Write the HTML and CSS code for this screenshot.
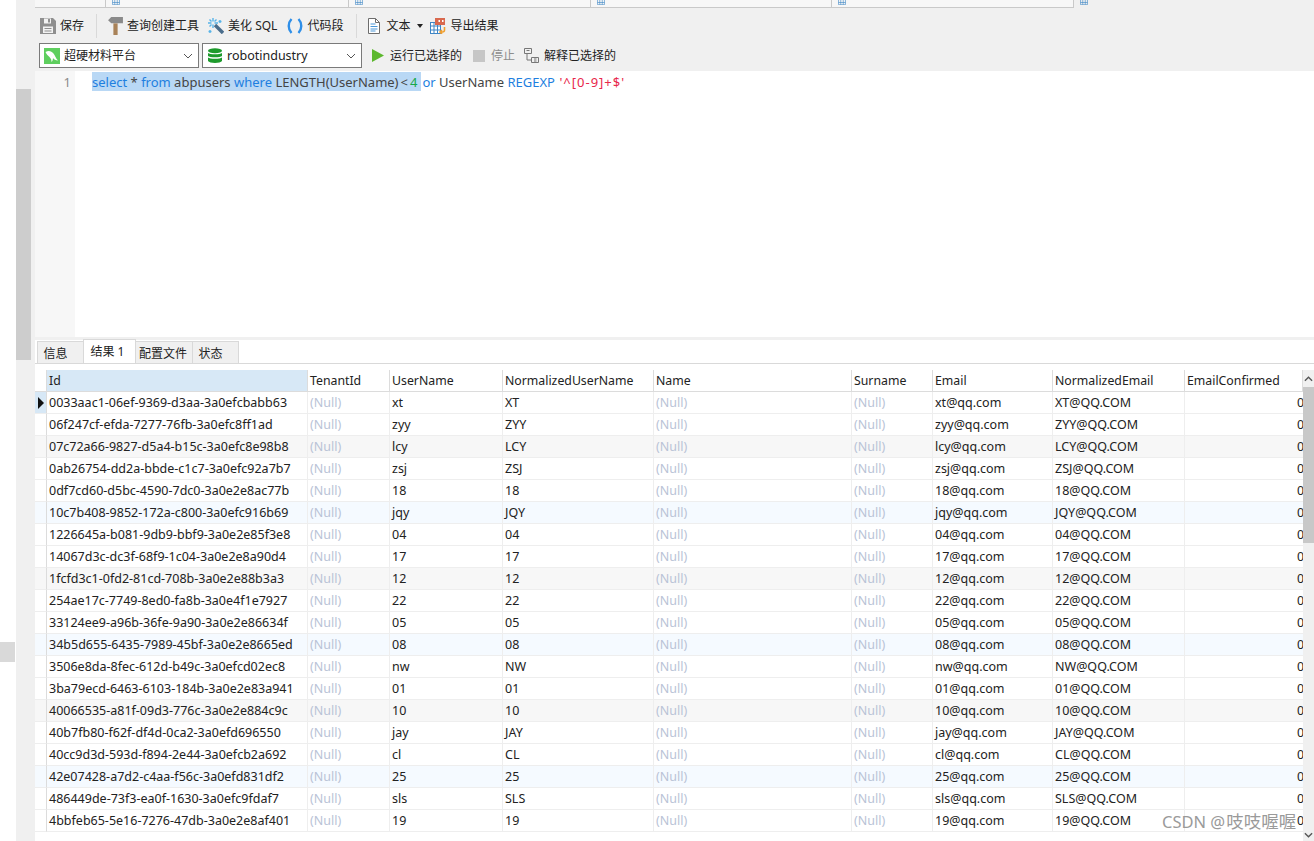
FILE: index.html
```html
<!DOCTYPE html>
<html lang="zh">
<head>
<meta charset="utf-8">
<title>Navicat</title>
<link rel="stylesheet" href="styles.css">
</head>
<body>
<div class="app">
  <aside class="rail-outer"><div class="rail-outer-thumb"></div></aside>
  <aside class="rail-inner"><div class="rail-inner-thumb"></div></aside>
  <main class="main">
    <div class="doc-tabs">
      <div class="doc-strip">
        <div class="doc-tab doc-tab-1"></div>
        <div class="doc-tab doc-tab-2"><svg class="mini" viewBox="0 0 12 8"><path d="M.5 0v7.500h11V0M4 0v7.500M8 0v7.500M.5 4h11" fill="none" stroke="#3f86c6"/></svg></div>
        <div class="doc-tab doc-tab-3"><svg class="mini" viewBox="0 0 12 8"><path d="M.5 0v7.500h11V0M4 0v7.500M8 0v7.500M.5 4h11" fill="none" stroke="#3f86c6"/></svg></div>
        <div class="doc-tab doc-tab-4"><svg class="mini" viewBox="0 0 12 8"><path d="M.5 0v7.500h11V0M4 0v7.500M8 0v7.500M.5 4h11" fill="none" stroke="#3f86c6"/></svg></div>
        <div class="doc-tab doc-tab-5"><svg class="mini" viewBox="0 0 12 8"><path d="M.5 0v7.500h11V0M4 0v7.500M8 0v7.500M.5 4h11" fill="none" stroke="#3f86c6"/></svg></div>
      </div>
      <svg class="mini mini-after" viewBox="0 0 12 8"><path d="M.5 0v7.500h11V0M4 0v7.500M8 0v7.500M.5 4h11" fill="none" stroke="#3f86c6"/></svg>
    </div>

    <div class="toolbar">
      <span class="tool tool-save"><svg class="ico" viewBox="0 0 16 16"><path d="M0 0h13l3 3v13H0z" fill="#8f8f8f"/><rect x="4" y=".5" width="7" height="5" fill="#f2f2f2"/><rect x="8" y="1" width="2" height="3.500" fill="#8f8f8f"/><rect x="3" y="8.500" width="10" height="6.500" fill="#f2f2f2"/><path d="M4.500 10.500h7M4.500 13h7" stroke="#8f8f8f"/></svg>保存</span>
      <i class="sep sep-a"></i>
      <span class="tool tool-query"><svg class="ico ico-ham" viewBox="0 0 14 17"><path d="M0 3l3-3h11v6H3z" fill="#8a8a8a"/><path d="M5 6h4v11H5z" fill="#a98258"/></svg>查询创建工具</span>
      <span class="tool tool-beauty"><svg class="ico" viewBox="0 0 16 16"><path d="M7 7l8 8" stroke="#4a6d8c" stroke-width="3.400"/><path d="M5 0v3.500M5 6.500V10M0 5h3.500M6.500 5H10M1.500 1.500l2 2M8.500 1.500l-2 2M1.500 8.500l2-2M12 2v3M10.500 3.500h3M2 12v3M.5 13.500h3" stroke="#57b3e8" stroke-width="1.400"/></svg>美化 SQL</span>
      <span class="tool tool-snippet"><svg class="ico ico-paren" viewBox="0 0 16 16"><path d="M4.500 1C.8 5 .8 11 4.500 15M11.500 1c3.700 4 3.700 10 0 14" fill="none" stroke="#2f8fe8" stroke-width="2.400"/></svg>代码段</span>
      <i class="sep sep-b"></i>
      <span class="tool tool-text"><svg class="ico" viewBox="0 0 14 16"><path d="M1.500.5h7l4 4v11h-11z" fill="#fff" stroke="#6d6d6d"/><path d="M8.500.5v4h4" fill="none" stroke="#6d6d6d"/><path d="M3.500 6h5M3.500 8.500h7M3.500 11h7M3.500 13h5" stroke="#4a97d8"/></svg>文本<b class="caret"></b></span>
      <span class="tool tool-export"><svg class="ico" viewBox="0 0 16 16"><rect x=".5" y="4.500" width="10" height="11" fill="#fff" stroke="#3f86c6"/><path d="M.5 8h10M.5 12h10M4 4.500v11M7.500 4.500v11" stroke="#3f86c6"/><rect x="5" y="0" width="10" height="7" fill="#d9694f"/><path d="M8.500 3h1.500M12 3h1.500" stroke="#fff" stroke-width="2"/><path d="M14.500 9v3a2 2 0 0 1-2 2h-2M12 12l-2 2 2 2" fill="none" stroke="#f0a030" stroke-width="1.600"/></svg>导出结果</span>
    </div>

    <div class="toolbar toolbar-run">
      <div class="select select-conn"><svg class="ico-sel" viewBox="0 0 16 16"><rect width="16" height="16" fill="#5fcf5f"/><path d="M1.500 4c3-2 6-1 8 1.500 1.500 2 2 4.500 4.500 7-2.500 0-4-1-5-2.500 0 1.500-.5 3-1.500 4 0-2-.5-3.500-2-5C3.500 7.500 2.500 6 1.500 4z" fill="#fff"/></svg><span class="sel-text">超硬材料平台</span><svg class="chev" viewBox="0 0 10 6"><path d="M1 1l4 4 4-4" fill="none" stroke="#555"/></svg></div>
      <div class="select select-db"><svg class="ico-sel" viewBox="0 0 16 16"><ellipse cx="8" cy="2.800" rx="7" ry="2.500" fill="#1d9a2c"/><path d="M1 5c1.500 1.800 12.500 1.800 14 0v3c-1.500 1.800-12.500 1.800-14 0zM1 9.500c1.500 1.800 12.500 1.800 14 0v3.500c-1.500 2.600-12.500 2.600-14 0z" fill="#1d9a2c"/></svg><span class="sel-text sel-latin">robotindustry</span><svg class="chev" viewBox="0 0 10 6"><path d="M1 1l4 4 4-4" fill="none" stroke="#555"/></svg></div>
      <span class="tool tool-run"><svg class="ico-run" viewBox="0 0 12 13"><path d="M0 0l12 6.500L0 13z" fill="#5cb82e"/></svg>运行已选择的</span>
      <span class="tool tool-stop"><i class="stop-box"></i>停止</span>
      <span class="tool tool-explain"><svg class="ico" viewBox="0 0 16 16"><path d="M.5.500h7v5h-7zM7.500 9.500h7v5h-7zM3 6v6h4.500M2.500 2.500h3M10 11h2.500M10 13h2.500" fill="none" stroke="#777"/></svg>解释已选择的</span>
    </div>

    <div class="editor">
      <div class="gutter">1</div>
      <div class="code"><span class="hl"><span class="kw">select</span> * <span class="kw">from</span> abpusers <span class="kw">where</span> LENGTH(UserName)<span class="lt">&lt;</span><span class="num">4</span></span><span class="kw kw-or">or</span> UserName <span class="kw">REGEXP</span> <span class="str">'^[0-9]+$'</span></div>
    </div>

    <div class="split"></div>

    <div class="result-tabs">
      <span class="rtab rtab-info">信息</span>
      <span class="rtab rtab-active">结果 1</span>
      <span class="rtab rtab-prof">配置文件</span>
      <span class="rtab rtab-state">状态</span>
    </div>

    <div class="grid-wrap">
      <table class="grid">
        <colgroup>
          <col class="c0"><col class="c1"><col class="c2"><col class="c3"><col class="c4"><col class="c5"><col class="c6"><col class="c7"><col class="c8"><col class="c9">
        </colgroup>
        <thead>
          <tr><th class="ind-h"></th><th class="sel">Id</th><th>TenantId</th><th>UserName</th><th>NormalizedUserName</th><th>Name</th><th>Surname</th><th>Email</th><th>NormalizedEmail</th><th>EmailConfirmed</th></tr>
        </thead>
        <tbody id="rows"></tbody>
      </table>
      <div class="vscroll">
        <svg class="arrow arrow-up" viewBox="0 0 10 6"><path d="M1 5l4-4 4 4" fill="none" stroke="#555" stroke-width="1.500"/></svg>
        <div class="vthumb"></div>
        <svg class="arrow arrow-down" viewBox="0 0 10 6"><path d="M1 1l4 4 4-4" fill="none" stroke="#555" stroke-width="1.500"/></svg>
      </div>
    </div>
    <div class="watermark">CSDN @<span class="wm-cjk">吱吱喔喔</span></div>
  </main>
</div>
<script src="rows.js"></script>
</body>
</html>
```

FILE: rows.js
```js
var data = [
  ["0033aac1-06ef-9369-d3aa-3a0efcbabb63","xt"],
  ["06f247cf-efda-7277-76fb-3a0efc8ff1ad","zyy"],
  ["07c72a66-9827-d5a4-b15c-3a0efc8e98b8","lcy"],
  ["0ab26754-dd2a-bbde-c1c7-3a0efc92a7b7","zsj"],
  ["0df7cd60-d5bc-4590-7dc0-3a0e2e8ac77b","18"],
  ["10c7b408-9852-172a-c800-3a0efc916b69","jqy"],
  ["1226645a-b081-9db9-bbf9-3a0e2e85f3e8","04"],
  ["14067d3c-dc3f-68f9-1c04-3a0e2e8a90d4","17"],
  ["1fcfd3c1-0fd2-81cd-708b-3a0e2e88b3a3","12"],
  ["254ae17c-7749-8ed0-fa8b-3a0e4f1e7927","22"],
  ["33124ee9-a96b-36fe-9a90-3a0e2e86634f","05"],
  ["34b5d655-6435-7989-45bf-3a0e2e8665ed","08"],
  ["3506e8da-8fec-612d-b49c-3a0efcd02ec8","nw"],
  ["3ba79ecd-6463-6103-184b-3a0e2e83a941","01"],
  ["40066535-a81f-09d3-776c-3a0e2e884c9c","10"],
  ["40b7fb80-f62f-df4d-0ca2-3a0efd696550","jay"],
  ["40cc9d3d-593d-f894-2e44-3a0efcb2a692","cl"],
  ["42e07428-a7d2-c4aa-f56c-3a0efd831df2","25"],
  ["486449de-73f3-ea0f-1630-3a0efc9fdaf7","sls"],
  ["4bbfeb65-5e16-7276-47db-3a0e2e8af401","19"]
];
var body = document.getElementById("rows");
var html = "";
data.forEach(function (r, i) {
  var n = i + 1, cls = "";
  if (n % 6 === 3) cls = "tint-gray";
  if (n % 6 === 0) cls = "tint-blue";
  var nul = '<td class="nul">(Null)</td>';
  html += '<tr class="' + cls + '">' +
    '<td class="ind' + (i === 0 ? " ind-cur" : "") + '"></td>' +
    '<td>' + r[0] + '</td>' + nul +
    '<td>' + r[1] + '</td><td>' + r[1].toUpperCase() + '</td>' + nul + nul +
    '<td>' + r[1] + '@qq.com</td><td>' + r[1].toUpperCase() + '@QQ.COM</td>' +
    '<td class="zero">0</td></tr>';
});
body.innerHTML = html;
```

FILE: styles.css
```css
* { box-sizing: border-box; }
html, body { margin: 0; height: 100%; }
body {
  width: 1314px;
  height: 841px;
  overflow: hidden;
  background: #fff;
  font-family: "Noto Sans", "Noto Sans CJK SC", sans-serif;
  font-size: 13px;
  color: #222;
}
.app { display: flex; height: 841px; }

.rail-outer { width: 16px; position: relative; background: #fff; }
.rail-outer-thumb { position: absolute; left: 0; top: 642px; width: 15px; height: 20px; background: #d9d9d9; }
.rail-inner { width: 19px; position: relative; background: #f0f0f0; }
.rail-inner-thumb { position: absolute; left: 0; top: 89px; width: 15px; height: 271px; background: #cdcdcd; }

.main { width: 1279px; display: flex; flex-direction: column; position: relative; background: #fff; }

.doc-tabs { height: 8px; background: #f0f0f0; display: flex; overflow: hidden; }
.doc-strip { width: 1039px; height: 8px; display: flex; background: #f7f7f7; border-bottom: 1px solid #c9c9c9; border-right: 1px solid #c9c9c9; }
.doc-tab { height: 7px; border-right: 1px solid #c9c9c9; padding-left: 4px; }
.doc-tab-1 { width: 71px; }
.doc-tab-2 { width: 243px; }
.doc-tab-3 { width: 242px; }
.doc-tab-4 { width: 241px; }
.doc-tab-5 { width: 241px; border-right: 0; }
.mini { display: block; width: 12px; height: 5px; }
.mini-after { margin: 0 0 0 4px; }

.toolbar { height: 32px; background: #f0f0f0; display: flex; align-items: center; padding: 3px 0 0 5px; font-size: 12px; }
.toolbar-run { height: 31px; padding: 0 0 0 4px; }
.tool { display: inline-flex; align-items: center; white-space: nowrap; line-height: 16px; }
.ico { width: 16px; height: 16px; margin-right: 4px; flex: none; }
.ico-ham { width: 15px; height: 18px; margin: 0 4px 0 0; }
.sep { width: 1px; height: 24px; background: #d9d9d9; flex: none; }
.sep-a { margin: 0 11px 0 12px; }
.sep-b { margin: 0 9px 0 13px; }
.tool-beauty { margin-left: 9px; }
.tool-snippet { margin-left: 10px; }
.ico-paren { margin-right: 4px; }
.tool-export { margin-left: 7px; }
.caret { width: 0; height: 0; margin-left: 7px; border: 3px solid transparent; border-top: 4px solid #222; border-bottom: 0; }

.select { height: 25px; background: #fff; border: 1px solid #7a7a7a; display: flex; align-items: center; padding: 0 5px 0 4px; flex: none; }
.select-conn { width: 160px; }
.select-db { width: 160px; margin-left: 3px; }
.ico-sel { width: 16px; height: 16px; flex: none; }
.sel-text { flex: 1; margin-left: 4px; font-size: 12px; line-height: 16px; }
.sel-latin { font-size: 12.500px; }
.chev { width: 10px; height: 6px; flex: none; }
.ico-run { width: 12px; height: 13px; margin-right: 6px; flex: none; }
.tool-run { margin-left: 10px; }
.tool-stop { margin-left: 11px; color: #8d8d8d; }
.stop-box { width: 12px; height: 12px; margin-right: 6px; background: #c6c6c6; }
.tool-explain { margin-left: 9px; }

.editor { height: 266px; display: flex; background: #fff; }
.gutter { width: 40px; background: #f7f7f7; color: #8a8a8a; text-align: right; padding-right: 4px; font-size: 13px; line-height: 22px; }
.code { padding-left: 17px; font-size: 13px; line-height: 20px; padding-top: 1px; white-space: pre; color: #444; }
.hl { background: #b9d8f5; display: inline-block; height: 19px; padding-right: 4px; }
.kw { color: #1e7fe0; }
.kw-or { margin-left: 1px; }
.lt { margin-left: 2px; }
.num { color: #1aa84a; margin-left: 2px; }
.str { color: #e8274b; letter-spacing: 1px; margin-left: 1px; }

.split { height: 3px; background: #f0f0f0; }

.result-tabs { height: 24px; display: flex; align-items: flex-end; border-bottom: 1px solid #d9d9d9; padding-left: 2px; font-size: 12px; }
.rtab { height: 22px; background: #f0f0f0; border: 1px solid #d9d9d9; border-bottom: 0; display: flex; align-items: center; justify-content: center; margin-left: -1px; }
.rtab-info { width: 47px; margin-left: 0; padding-right: 10px; }
.rtab-active { width: 53px; height: 24px; background: #fff; position: relative; z-index: 1; padding: 0 4px 2px 0; }
.rtab-prof { width: 58px; padding-right: 2px; }
.rtab-state { width: 47px; padding-right: 10px; }

.grid-wrap { position: relative; margin-top: 6px; height: 467px; }
.grid { border-collapse: separate; border-spacing: 0; table-layout: fixed; width: 1268px; font-size: 12.500px; color: #222; }
.c0 { width: 12px; }
.c1 { width: 261px; }
.c2 { width: 82px; }
.c3 { width: 113px; }
.c4 { width: 151px; }
.c5 { width: 198px; }
.c6 { width: 81px; }
.c7 { width: 120px; }
.c8 { width: 132px; }
.c9 { width: 118px; }
.grid th, .grid td {
  padding: 0 0 0 2px;
  text-align: left;
  font-weight: 400;
  white-space: nowrap;
  overflow: hidden;
  border-right: 1px solid #eeeeee;
  border-bottom: 1px solid #eeeeee;
}
.grid th { height: 22px; font-size: 12.300px; border-right-color: #dcdcdc; border-bottom: 1px solid #dcdcdc; }
.grid td { height: 22px; }
.grid th.sel { background: #d7e8f6; }
.grid th.ind-h { background: #fff; }
.grid td.ind { border-right: 1px solid #dcdcdc; padding: 0; position: relative; }
.ind-cur { background: #d7e8f6; }
.ind-cur::after { content: ""; position: absolute; left: 3px; top: 5px; border: 6px solid transparent; border-left: 6px solid #111; border-right: 0; }
.grid td.nul { color: #b9c3d6; }
.grid td.zero { padding: 0 0 0 112px; border-right: 0; }
.tint-gray td { background: #f7f7f7; }
.tint-blue td { background: #f5faff; }

.vscroll { position: absolute; left: 1268px; top: 0; width: 11px; height: 471px; background: #f0f0f0; }
.vthumb { position: absolute; left: 0; top: 17px; width: 11px; height: 156px; background: #c8c8c8; }
.arrow { position: absolute; left: 1px; width: 9px; height: 6px; }
.arrow-up { top: 6px; }
.arrow-down { bottom: 3px; }

.watermark { position: absolute; left: 1127px; top: 811px; color: #9a9a9a; font-size: 16.500px; line-height: 20px; white-space: nowrap; }
.wm-cjk { font-size: 17.500px; margin-left: 1px; }
```
